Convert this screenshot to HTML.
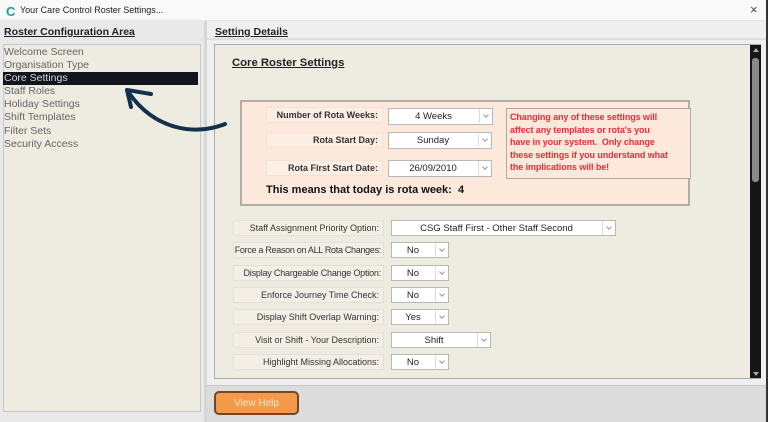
<!DOCTYPE html>
<html><head><style>
*{margin:0;padding:0;box-sizing:border-box}
body{width:768px;height:422px;overflow:hidden;background:#e9e9e9;font-family:"Liberation Sans",sans-serif;position:relative;font-size:10px;color:#333}
.a{position:absolute;white-space:nowrap}
.lbl{position:absolute;background:#f3efe6;border:1px solid #e4e0d6;text-align:right;padding-right:4px;font-size:9px;color:#333;height:16px;line-height:15px;white-space:nowrap;overflow:hidden}
.dd{position:absolute;background:#fff;border:1px solid #b8b8b8;text-align:center;font-size:9.5px;color:#222;height:16px;line-height:15px;padding-right:14px;white-space:nowrap}
.dd:after{content:"";position:absolute;right:0;top:0;width:12px;height:14px;border-left:1px solid #ddd;background:#fff}
.dd i{position:absolute;right:4px;top:4px;width:4px;height:4px;border-right:1px solid #999;border-bottom:1px solid #999;transform:rotate(45deg);z-index:2}
.pl{position:absolute;font-weight:bold;font-size:9px;text-align:right;height:16px;line-height:15px;background:#fdeee4;border:1px solid #f4e2d6;padding-right:4px;color:#333;white-space:nowrap}
</style></head><body>
<div class="a" style="left:0;top:0;width:768px;height:21px;background:#f9f9f9;border-bottom:1px solid #e6e6e6"></div>
<div class="a" style="left:6px;top:4px;font-size:13px;font-weight:bold;color:#1a9aa8">C</div>
<div class="a" style="left:20px;top:5px;font-size:9px;color:#222">Your Care Control Roster Settings...</div>
<div class="a" style="left:750px;top:2px;font-size:13px;color:#444">×</div>
<div class="a" style="left:766px;top:0;width:2px;height:422px;background:#333"></div>
<div class="a" style="left:4px;top:26px;font-size:10.5px;font-weight:bold;text-decoration:underline;color:#222">Roster Configuration Area</div>
<div class="a" style="left:3px;top:44px;width:198px;height:368px;background:#eeebe1;border:1px solid #c8c8c8"></div>
<div class="a" style="left:4px;top:46px;font-size:10.5px;color:#666;line-height:13.1px">Welcome Screen<br>Organisation Type<br><span style="display:block;background:#14141e;color:#d8d8d8;width:195px;margin-left:-1px;padding-left:1px">Core Settings</span>Staff Roles<br>Holiday Settings<br>Shift Templates<br>Filter Sets<br>Security Access</div>
<div class="a" style="left:204px;top:21px;width:3px;height:401px;background:#d6d6d6"></div>
<div class="a" style="left:207px;top:21px;width:559px;height:401px;background:#efefef"></div>
<div class="a" style="left:215px;top:26px;font-size:10.5px;font-weight:bold;text-decoration:underline;color:#222">Setting Details</div>
<div class="a" style="left:207px;top:38px;width:559px;height:2px;background:#ddd"></div>
<div class="a" style="left:214px;top:44px;width:547px;height:335px;background:#eeebe1;border:1px solid #aaa"></div>
<div class="a" style="left:750px;top:45px;width:11px;height:333px;background:#151515"></div>
<div class="a" style="left:752px;top:58px;width:7px;height:124px;background:#8a8a8a;border-radius:3px"></div>
<div class="a" style="left:753px;top:48px;width:0;height:0;border-left:3px solid transparent;border-right:3px solid transparent;border-bottom:4px solid #aaa"></div>
<div class="a" style="left:753px;top:372px;width:0;height:0;border-left:3px solid transparent;border-right:3px solid transparent;border-top:4px solid #aaa"></div>
<div class="a" style="left:207px;top:385px;width:559px;height:37px;background:#dcdcdc;border-top:1px solid #c8c8c8"></div>
<div class="a" style="left:232px;top:57px;font-size:11.3px;font-weight:bold;text-decoration:underline;color:#222">Core Roster Settings</div>
<div class="a" style="left:240px;top:100px;width:450px;height:106px;background:#fde9dc;border:2px solid #b5aca6"></div>
<div class="pl" style="left:266px;top:107px;width:117px">Number of Rota Weeks:</div>
<div class="pl" style="left:266px;top:132px;width:117px">Rota Start Day:</div>
<div class="pl" style="left:266px;top:160px;width:117px">Rota First Start Date:</div>
<div class="dd" style="left:388px;top:108px;width:105px;height:17px">4 Weeks<i></i></div>
<div class="dd" style="left:388px;top:132px;width:104px;height:17px">Sunday<i></i></div>
<div class="dd" style="left:388px;top:160px;width:104px;height:17px">26/09/2010<i></i></div>
<div class="a" style="left:266px;top:184px;font-size:11px;font-weight:bold;color:#111">This means that today is rota week:&nbsp; 4</div>
<div class="a" style="left:506px;top:108px;width:185px;height:71px;border:1px solid #aaa;background:#fde9dc;color:#ee2a3a;font-weight:bold;font-size:9px;line-height:12.6px;padding:2px 3px;letter-spacing:-0.1px">Changing any of these settings will<br>affect any templates or rota's you<br>have in your system.&nbsp; Only change<br>these settings if you understand what<br>the implications will be!</div>
<div class="lbl" style="left:233px;top:220px;width:151px">Staff Assignment Priority Option:</div>
<div class="dd" style="left:391px;top:220px;width:225px">CSG Staff First - Other Staff Second<i></i></div>
<div class="lbl" style="left:233px;top:242px;width:151px;letter-spacing:-0.3px;padding-right:2px">Force a Reason on ALL Rota Changes:</div>
<div class="dd" style="left:391px;top:242px;width:58px">No<i></i></div>
<div class="lbl" style="left:233px;top:265px;width:151px;letter-spacing:-0.2px;padding-right:2px">Display Chargeable Change Option:</div>
<div class="dd" style="left:391px;top:265px;width:58px">No<i></i></div>
<div class="lbl" style="left:233px;top:287px;width:151px">Enforce Journey Time Check:</div>
<div class="dd" style="left:391px;top:287px;width:58px">No<i></i></div>
<div class="lbl" style="left:233px;top:309px;width:151px">Display Shift Overlap Warning:</div>
<div class="dd" style="left:391px;top:309px;width:58px">Yes<i></i></div>
<div class="lbl" style="left:233px;top:332px;width:151px">Visit or Shift - Your Description:</div>
<div class="dd" style="left:391px;top:332px;width:100px">Shift<i></i></div>
<div class="lbl" style="left:233px;top:354px;width:151px">Highlight Missing Allocations:</div>
<div class="dd" style="left:391px;top:354px;width:58px">No<i></i></div>
<div class="a" style="left:214px;top:391px;width:85px;height:24px;background:#f59a48;border:2px solid #6e4a2a;border-radius:5px;color:#fde6d0;font-size:10px;text-align:center;line-height:22px">View Help</div>
<svg class="a" style="left:0;top:0" width="768" height="422"><g fill="none" stroke="#13324a" stroke-width="4" stroke-linecap="round"><path d="M225 124 C195 136 155 130 129 93"/><path d="M127 90 L151 94 M127 90 L131 107"/></g></svg>
</body></html>
